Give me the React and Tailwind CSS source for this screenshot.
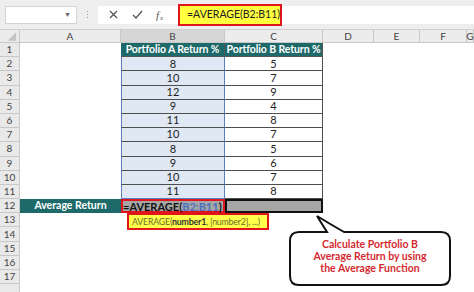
import React from 'react'

const colWidths = [20, 101, 104, 98, 51, 46, 47, 7]
const colNames = ['', 'A', 'B', 'C', 'D', 'E', 'F', 'G']
const portA = [8, 10, 12, 9, 11, 10, 8, 9, 10, 11]
const portB = [5, 7, 9, 4, 8, 7, 5, 6, 7, 8]

function RowHead({ n }) {
  return (
    <div className="w-[20px] shrink-0 h-full bg-[#e9e9e9] border-r border-b border-[#c8c8c8] flex items-center justify-center text-[10px] text-[#444]">
      {n}
    </div>
  )
}

function FormulaBar() {
  return (
    <div className="h-[30px] bg-[#eeeeee] border-b border-[#cfcfcf] flex items-center">
      <div className="ml-[5px] w-[72px] h-[18px] bg-white border border-[#d4d4d4] flex items-center justify-end pr-[5px]">
        <span className="text-[7px] text-[#666] leading-none">▼</span>
      </div>
      <div className="w-[21px] flex flex-col items-center gap-[2px]">
        <span className="w-[1px] h-[1px] bg-[#999]" />
        <span className="w-[1px] h-[1px] bg-[#999]" />
        <span className="w-[1px] h-[1px] bg-[#999]" />
      </div>
      <div className="flex-1 h-[18px] bg-white flex items-center">
        <svg width="80" height="18" viewBox="0 0 80 18" className="shrink-0">
          <path d="M12 5 L19 12 M19 5 L12 12" stroke="#555" strokeWidth="1.3" fill="none" />
          <path d="M35 9 L38 12 L44 5" stroke="#555" strokeWidth="1.3" fill="none" />
          <text x="58" y="13" fontSize="11" fontStyle="italic" fill="#555" fontFamily="Liberation Serif, serif">f</text>
          <text x="62" y="14" fontSize="7" fontStyle="italic" fill="#555" fontFamily="Liberation Serif, serif">x</text>
        </svg>
        <div className="h-[22px] w-[104px] -my-[2px] bg-[#ffff3f] border-2 border-[#e0141b] flex items-center pl-[7px] text-[10.5px] text-[#222] whitespace-nowrap">
          =AVERAGE(B2:B11)
        </div>
      </div>
    </div>
  )
}

function HeaderRow() {
  return (
    <div className="flex h-[13px]">
      {colWidths.map((w, i) => (
        <div
          key={i}
          style={{ width: w }}
          className={
            'shrink-0 h-full border-r border-b border-[#c8c8c8] flex items-center justify-center text-[10px] text-[#444] ' +
            (i === 2 ? 'bg-[#d6d6d6]' : 'bg-[#ececec]')
          }
        >
          {i === 0 ? (
            <svg width="20" height="13" viewBox="0 0 20 13">
              <path d="M17 2 L17 11 L8 11 Z" fill="#c4c4c4" />
            </svg>
          ) : (
            colNames[i]
          )}
        </div>
      ))}
    </div>
  )
}

function Rest() {
  return <div className="flex-1 h-full bg-white" />
}

export default function App() {
  return (
    <div className="relative w-[474px] h-[292px] overflow-hidden bg-white font-['Lato',sans-serif]">
      <FormulaBar />
      <HeaderRow />

      <div className="flex h-[14.2px]">
        <RowHead n={1} />
        <div className="w-[101px] shrink-0 h-full bg-white" />
        <div className="w-[104px] shrink-0 h-full bg-[#1e6a6a] border-r border-b border-[#555] flex items-center justify-center text-white font-bold text-[10.5px] tracking-[-0.1px]">
          Portfolio A Return %
        </div>
        <div className="w-[98px] shrink-0 h-full bg-[#1e6a6a] border-r border-b border-[#555] flex items-center justify-center text-white font-bold text-[10.5px] tracking-[-0.1px]">
          Portfolio B Return %
        </div>
        <Rest />
      </div>

      {portA.map((a, i) => (
        <div key={i} className="flex h-[14.2px]">
          <RowHead n={i + 2} />
          <div className="w-[101px] shrink-0 h-full bg-white" />
          <div
            className={
              'w-[104px] shrink-0 h-full bg-[#dfe8f3] border-x border-[#5a7fc0] flex items-center justify-center text-[11px] text-[#222] ' +
              (i === portA.length - 1 ? 'border-b border-b-[#5a7fc0]' : 'border-b border-b-[#4d4d4d]')
            }
          >
            {a}
          </div>
          <div className="w-[98px] shrink-0 h-full bg-white border-r border-b border-[#4d4d4d] flex items-center justify-center text-[11px] text-[#222]">
            {portB[i]}
          </div>
          <Rest />
        </div>
      ))}

      <div className="flex h-[14.2px]">
        <RowHead n={12} />
        <div className="w-[101px] shrink-0 h-full bg-[#1e6a6a] flex items-center justify-center text-white font-bold text-[10.5px]">
          Average Return
        </div>
        <div className="w-[104px] shrink-0 h-full bg-[#a6a6a6] border-2 border-[#e0141b] flex items-center text-[11px] font-bold text-[#111] leading-none">
          =AVERAGE(<span className="text-[#4a6fc0]">B2:B11</span>)
        </div>
        <div className="w-[98px] shrink-0 h-full bg-[#a6a6a6] border-2 border-[#111]" />
        <Rest />
      </div>

      {[13, 14, 15, 16, 17].map((n) => (
        <div key={n} className="flex h-[14.2px]">
          <RowHead n={n} />
          <Rest />
        </div>
      ))}
      <div className="flex h-[8px] overflow-hidden">
        <div className="w-[20px] shrink-0 h-full bg-[#e9e9e9] border-r border-[#c8c8c8]" />
        <Rest />
      </div>

      <div className="absolute left-[127px] top-[213px] w-[142px] h-[17px] bg-[#ffff4a] border-2 border-[#e0141b] flex items-center pl-[3px] text-[8.8px] tracking-[-0.2px] text-[#6b6b2e] whitespace-nowrap">
        AVERAGE(<span className="font-bold text-[#333]">number1</span>, [number2], ...)
      </div>

      <svg className="absolute left-0 top-0 pointer-events-none" width="474" height="292" viewBox="0 0 474 292">
        <path
          d="M299 232 L327 232 Q322 224 317 216 Q330 224 344 232 L441 232 Q450 232 450 241 L450 276 Q450 285 441 285 L299 285 Q290 285 290 276 L290 241 Q290 232 299 232 Z"
          fill="white"
          stroke="#111"
          strokeWidth="2"
        />
      </svg>

      <div className="absolute left-[290px] top-[239px] w-[160px] text-center font-bold text-[10.5px] leading-[11.8px] text-[#d42a2f]">
        Calculate Portfolio B
        <br />
        Average Return by using
        <br />
        the Average Function
      </div>
    </div>
  )
}
